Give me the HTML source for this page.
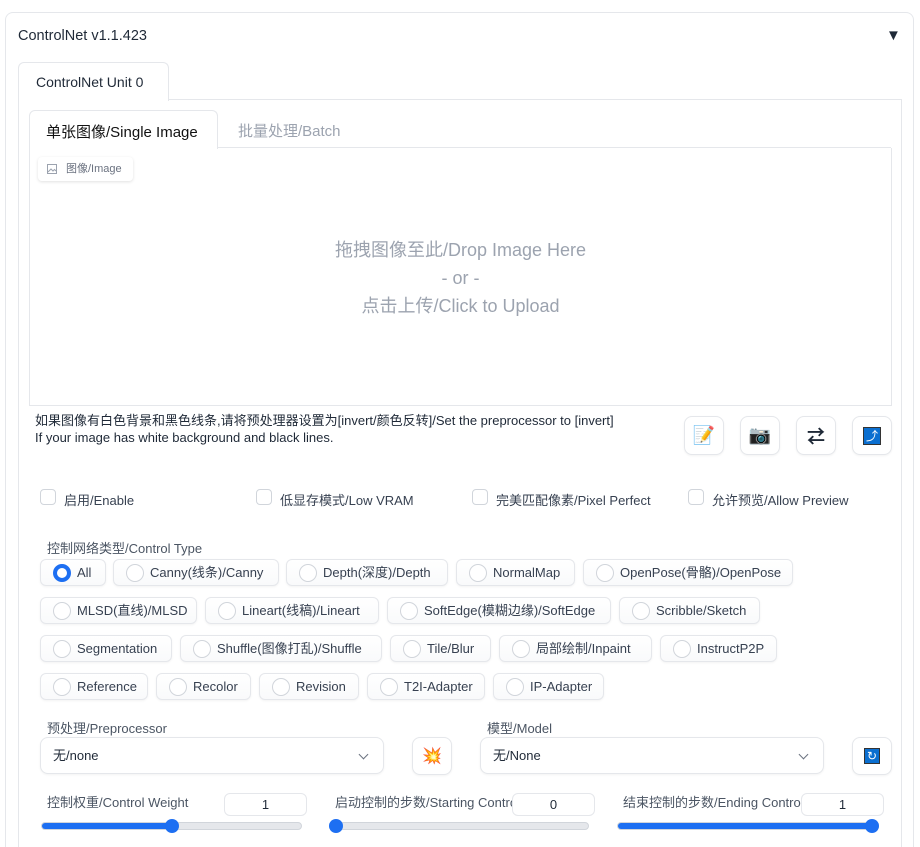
<!DOCTYPE html>
<html><head><meta charset="utf-8"><style>
*{box-sizing:border-box;margin:0;padding:0}
html,body{width:920px;height:847px;overflow:hidden}
body{background:#fff;font-family:"Liberation Sans","Noto Sans CJK SC",sans-serif;color:#1f2937;position:relative;font-size:14px}
.a{position:absolute}
.box{border:1px solid #e5e7eb}
.pill{position:absolute;height:27px;border:1px solid #e5e7eb;border-radius:6px;background:linear-gradient(#fff,#f9fafb);box-shadow:0 1px 2px rgba(0,0,0,.05);font-size:13px;color:#374151;line-height:25px;padding-left:36px;white-space:nowrap}
.pill:before{content:"";position:absolute;left:12px;top:4px;width:16px;height:16px;border:1px solid #d1d5db;border-radius:50%;background:#fff}
.pill.on:before{border:4px solid #1d6ff2;width:10px;height:10px}
.cb{position:absolute;width:16px;height:16px;border:1px solid #d1d5db;border-radius:4px;background:#fff}
.lbl{position:absolute;font-size:13px;color:#374151;white-space:nowrap}
.ib{position:absolute;width:40px;height:39px;border:1px solid #e5e7eb;border-radius:8px;background:#fff;box-shadow:0 1px 2px rgba(0,0,0,.05);display:flex;align-items:center;justify-content:center;font-size:18px}
.sel{position:absolute;height:37px;border:1px solid #e5e7eb;border-radius:8px;background:#fff;box-shadow:0 1px 2px rgba(0,0,0,.05);font-size:13px;line-height:35px;padding-left:12px;color:#1f2937}
.sel:after{content:"";position:absolute;right:16px;top:13px;width:6px;height:6px;border-right:1.5px solid #6b7280;border-bottom:1.5px solid #6b7280;transform:rotate(45deg)}
.num{position:absolute;width:83px;height:23px;border:1px solid #e5e7eb;border-radius:6px;background:#fff;text-align:center;font-size:13px;line-height:21px}
.track{position:absolute;height:8px;border:1px solid #d1d5db;border-radius:4px;background:#e5e7eb;overflow:hidden}
.fill{position:absolute;left:0;top:0;bottom:0;background:#1d6ff2}
.thumb{position:absolute;width:14px;height:14px;border-radius:50%;background:#1d6ff2}
</style></head><body>
<div class="a box" style="left:5px;top:12px;width:909px;height:835px;border-radius:8px 8px 0 0;border-bottom:none"></div>
<div class="a" style="left:18px;top:28px;font-size:14.5px">ControlNet v1.1.423</div>
<div class="a" style="left:886px;top:27px;font-size:15px">▼</div>
<div class="a box" style="left:18px;top:99px;width:884px;height:748px;border-width:1px 1px 0 1px"></div>
<div class="a" style="left:18px;top:62px;width:151px;height:39px;border:1px solid #e5e7eb;border-bottom:none;border-radius:6px 6px 0 0;background:#fff;font-size:14px;padding:11px 0 0 17px">ControlNet Unit 0</div>
<div class="a" style="left:29px;top:147px;width:862px;height:1px;background:#e5e7eb"></div>
<div class="a" style="left:29px;top:110px;width:189px;height:39px;border:1px solid #e5e7eb;border-bottom:none;border-radius:6px 6px 0 0;background:#fff;font-size:15px;padding:10px 0 0 16px;color:#111">单张图像/Single Image</div>
<div class="a" style="left:238px;top:120px;font-size:15px;color:#9ca3af">批量处理/Batch</div>
<div class="a box" style="left:29px;top:148px;width:863px;height:258px;border-top:none"></div>
<div class="a" style="left:38px;top:157px;width:95px;height:24px;border-radius:4px;background:#fff;box-shadow:0 1px 3px rgba(0,0,0,.12);font-size:11px;color:#6b7280;line-height:24px;padding-left:28px">图像/Image
<svg class="a" style="left:9px;top:7px" width="10" height="10" viewBox="0 0 10 10"><rect x=".5" y=".5" width="9" height="9" fill="none" stroke="#9ca3af"/><path d="M1 8l3-3 2 2 1.5-1.5L9 7" fill="none" stroke="#9ca3af"/></svg></div>
<div class="a" style="left:29px;top:236px;width:863px;text-align:center;font-size:18px;color:#9ca3af;line-height:28px">拖拽图像至此/Drop Image Here<br>- or -<br>点击上传/Click to Upload</div>
<div class="lbl" style="left:35px;top:410px;color:#1f2937">如果图像有白色背景和黑色线条,请将预处理器设置为[invert/颜色反转]/Set the preprocessor to [invert]</div>
<div class="lbl" style="left:35px;top:430px;color:#1f2937">If your image has white background and black lines.</div>
<div class="ib" style="left:684px;top:416px">📝</div>
<div class="ib" style="left:740px;top:416px">📷</div>
<div class="ib" style="left:796px;top:416px;font-weight:bold">⇄</div>
<div class="ib" style="left:852px;top:416px"><span style="display:block;width:18px;height:18px;background:#0b6fd0;border:1px solid #333;color:#fff;font-size:12px;text-align:center;line-height:16px">⤴</span></div>
<div class="cb" style="left:40px;top:489px"></div><div class="lbl" style="left:64px;top:490px">启用/Enable</div>
<div class="cb" style="left:256px;top:489px"></div><div class="lbl" style="left:280px;top:490px">低显存模式/Low VRAM</div>
<div class="cb" style="left:472px;top:489px"></div><div class="lbl" style="left:496px;top:490px">完美匹配像素/Pixel Perfect</div>
<div class="cb" style="left:688px;top:489px"></div><div class="lbl" style="left:712px;top:490px">允许预览/Allow Preview</div>
<div class="lbl" style="left:47px;top:538px;color:#4b5563">控制网络类型/Control Type</div>
<div class="pill on" style="left:40px;top:559px;width:66px">All</div>
<div class="pill" style="left:113px;top:559px;width:166px">Canny(线条)/Canny</div>
<div class="pill" style="left:286px;top:559px;width:162px">Depth(深度)/Depth</div>
<div class="pill" style="left:456px;top:559px;width:119px">NormalMap</div>
<div class="pill" style="left:583px;top:559px;width:210px">OpenPose(骨骼)/OpenPose</div>
<div class="pill" style="left:40px;top:597px;width:157px">MLSD(直线)/MLSD</div>
<div class="pill" style="left:205px;top:597px;width:174px">Lineart(线稿)/Lineart</div>
<div class="pill" style="left:387px;top:597px;width:224px">SoftEdge(模糊边缘)/SoftEdge</div>
<div class="pill" style="left:619px;top:597px;width:141px">Scribble/Sketch</div>
<div class="pill" style="left:40px;top:635px;width:132px">Segmentation</div>
<div class="pill" style="left:180px;top:635px;width:202px">Shuffle(图像打乱)/Shuffle</div>
<div class="pill" style="left:390px;top:635px;width:101px">Tile/Blur</div>
<div class="pill" style="left:499px;top:635px;width:153px">局部绘制/Inpaint</div>
<div class="pill" style="left:660px;top:635px;width:117px">InstructP2P</div>
<div class="pill" style="left:40px;top:673px;width:108px">Reference</div>
<div class="pill" style="left:156px;top:673px;width:95px">Recolor</div>
<div class="pill" style="left:259px;top:673px;width:100px">Revision</div>
<div class="pill" style="left:367px;top:673px;width:118px">T2I-Adapter</div>
<div class="pill" style="left:493px;top:673px;width:111px">IP-Adapter</div>
<div class="lbl" style="left:47px;top:718px;color:#4b5563">预处理/Preprocessor</div>
<div class="lbl" style="left:487px;top:718px;color:#4b5563">模型/Model</div>
<div class="sel" style="left:40px;top:737px;width:344px">无/none</div>
<div class="ib" style="left:412px;top:737px;height:38px;font-size:16px">💥</div>
<div class="sel" style="left:480px;top:737px;width:344px">无/None</div>
<div class="ib" style="left:852px;top:737px;height:38px"><span style="display:block;width:16px;height:16px;background:#0b6fd0;border:1px solid #333;color:#fff;font-size:12px;text-align:center;line-height:14px">↻</span></div>
<div class="lbl" style="left:47px;top:792px;color:#4b5563">控制权重/Control Weight</div>
<div class="lbl" style="left:335px;top:792px;color:#4b5563;width:178px;overflow:hidden">启动控制的步数/Starting Control Step</div>
<div class="lbl" style="left:623px;top:792px;color:#4b5563;width:178px;overflow:hidden">结束控制的步数/Ending Control Step</div>
<div class="num" style="left:224px;top:793px">1</div>
<div class="num" style="left:512px;top:793px">0</div>
<div class="num" style="left:801px;top:793px">1</div>
<div class="track" style="left:41px;top:822px;width:261px"><div class="fill" style="width:132px"></div></div><div class="thumb" style="left:165px;top:819px"></div>
<div class="track" style="left:330px;top:822px;width:259px"></div><div class="thumb" style="left:329px;top:819px"></div>
<div class="track" style="left:617px;top:822px;width:262px"><div class="fill" style="width:100%"></div></div><div class="thumb" style="left:865px;top:819px"></div>
</body></html>
